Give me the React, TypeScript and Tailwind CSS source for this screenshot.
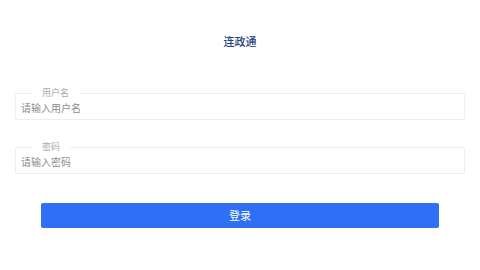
import React from "react";

const FONT = { fontFamily: '"Noto Sans CJK SC", "Noto Sans", sans-serif' };

function Field({ label, placeholder, type }: { label: string; placeholder: string; type: string }) {
  return (
    <fieldset className="mx-[15px] rounded-[2px] border border-[#eeeeee] px-[5px] pb-[3px]">
      <legend className="ml-[11px] px-[10px] text-[9px] leading-[10px] text-[#a8a8a8]">{label}</legend>
      <input
        type={type}
        placeholder={placeholder}
        className="mt-[2px] block h-4 w-full bg-transparent text-[10px] leading-4 text-[#333] outline-none placeholder:text-[#8c8c8c]"
      />
    </fieldset>
  );
}

export default function App() {
  return (
    <div className="flex h-[270px] w-full flex-col bg-white" style={FONT}>
      <h1 className="mt-[33px] h-4 text-center text-[11px] font-medium leading-4 text-[#23407c]">连政通</h1>
      <div className="mt-[39px]">
        <Field label="用户名" placeholder="请输入用户名" type="text" />
      </div>
      <div className="mt-[22px]">
        <Field label="密码" placeholder="请输入密码" type="password" />
      </div>
      <button className="mx-[41px] mt-[29px] h-[25px] rounded-[2px] bg-[#2e6ff6] text-[11px] text-white">
        登录
      </button>
    </div>
  );
}
